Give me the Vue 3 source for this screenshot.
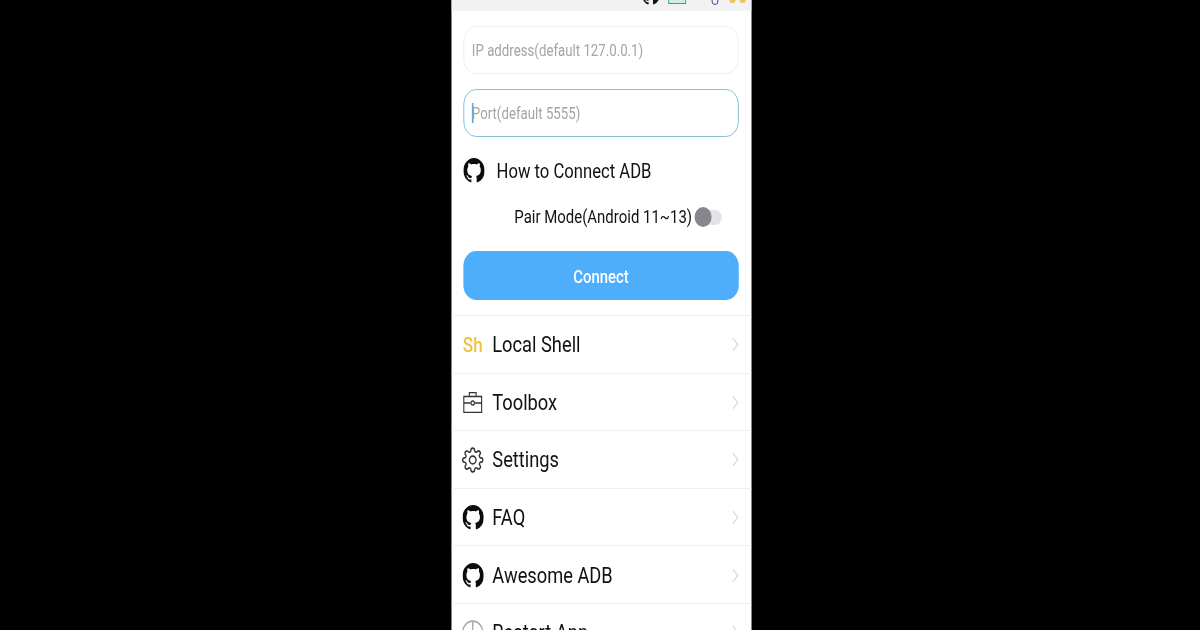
<script setup>
const github = 'M8 0C3.58 0 0 3.58 0 8c0 3.54 2.29 6.53 5.47 7.59.4.07.55-.17.55-.38 0-.19-.01-.82-.01-1.49-2.01.37-2.53-.49-2.69-.94-.09-.23-.48-.94-.82-1.13-.28-.15-.68-.52-.01-.53.63-.01 1.08.58 1.23.82.72 1.21 1.87.87 2.33.66.07-.52.28-.87.51-1.07-1.78-.2-3.64-.89-3.64-3.95 0-.87.31-1.59.82-2.15-.08-.2-.36-1.02.08-2.12 0 0 .67-.21 2.2.82.64-.18 1.32-.27 2-.27.68 0 1.36.09 2 .27 1.53-1.04 2.2-.82 2.2-.82.44 1.1.16 1.92.08 2.12.51.56.82 1.27.82 2.15 0 3.07-1.87 3.75-3.65 3.95.29.25.54.73.54 1.48 0 1.07-.01 1.93-.01 2.2 0 .21.15.46.55.38A8.013 8.013 0 0016 8c0-4.42-3.58-8-8-8z'

const rows = [
  { label: 'Local Shell', icon: 'sh' },
  { label: 'Toolbox', icon: 'toolbox' },
  { label: 'Settings', icon: 'gear' },
  { label: 'FAQ', icon: 'github' },
  { label: 'Awesome ADB', icon: 'github' },
  { label: 'Restart App', icon: 'restart' }
]
</script>

<template>
  <div class="page">
    <div class="phone">
      <div class="status">
        <svg class="st_git" viewBox="0 0 16 16"><path :d="github" /></svg>
        <span class="st_batt"></span>
        <span class="st_blue"></span>
        <span class="st_dots"><i></i><i></i></span>
      </div>

      <div class="form">
        <div class="field">IP address(default 127.0.0.1)</div>
        <div class="field focused"><span class="caret"></span>Port(default 5555)</div>

        <div class="howto">
          <svg class="git_icon" viewBox="0 0 16 16"><path :d="github" /></svg>
          <span class="howto_text">How to Connect ADB</span>
        </div>

        <div class="pair">
          <span>Pair Mode(Android 11~13)</span>
          <span class="switch"><span class="knob"></span></span>
        </div>

        <button class="connect">Connect</button>
      </div>

      <div class="list">
        <div v-for="row in rows" :key="row.label" class="row">
          <span class="row_icon">
            <span v-if="row.icon === 'sh'" class="sh">Sh</span>
            <svg v-else-if="row.icon === 'github'" class="git_icon" viewBox="0 0 16 16"><path :d="github" /></svg>
            <svg v-else-if="row.icon === 'toolbox'" class="line_icon toolbox" viewBox="1 2 22 21">
              <path d="M1.5 6.5h21v16h-21zM1.5 13h8M14.5 13h8M8 6.5V2.5h8v4" />
              <circle cx="12" cy="13" r="2" />
            </svg>
            <svg v-else-if="row.icon === 'gear'" class="line_icon" viewBox="0 0 24 24">
              <circle cx="12" cy="12" r="3.6" />
              <path d="M19.4 15a1.65 1.65 0 0 0 .33 1.82l.06.06a2 2 0 0 1 0 2.83 2 2 0 0 1-2.83 0l-.06-.06a1.65 1.65 0 0 0-1.82-.33 1.65 1.65 0 0 0-1 1.51V21a2 2 0 0 1-2 2 2 2 0 0 1-2-2v-.09A1.65 1.65 0 0 0 9 19.4a1.65 1.65 0 0 0-1.82.33l-.06.06a2 2 0 0 1-2.83 0 2 2 0 0 1 0-2.83l.06-.06a1.65 1.65 0 0 0 .33-1.82 1.65 1.65 0 0 0-1.51-1H3a2 2 0 0 1-2-2 2 2 0 0 1 2-2h.09A1.65 1.65 0 0 0 4.6 9a1.65 1.65 0 0 0-.33-1.82l-.06-.06a2 2 0 0 1 0-2.83 2 2 0 0 1 2.83 0l.06.06a1.65 1.65 0 0 0 1.82.33H9a1.65 1.65 0 0 0 1-1.51V3a2 2 0 0 1 2-2 2 2 0 0 1 2 2v.09a1.65 1.65 0 0 0 1 1.51 1.65 1.65 0 0 0 1.82-.33l.06-.06a2 2 0 0 1 2.83 0 2 2 0 0 1 0 2.83l-.06.06a1.65 1.65 0 0 0-.33 1.82V9a1.65 1.65 0 0 0 1.51 1H21a2 2 0 0 1 2 2 2 2 0 0 1-2 2h-.09a1.65 1.65 0 0 0-1.51 1z" />
            </svg>
            <svg v-else class="line_icon restart" viewBox="0 0 24 24">
              <circle cx="12" cy="12" r="11" />
              <path d="M12 1v11" />
            </svg>
          </span>
          <span class="row_label">{{ row.label }}</span>
          <svg class="chevron" viewBox="0 0 10 18" preserveAspectRatio="none"><path d="M1.5 1.5L8.5 9L1.5 16.5" /></svg>
        </div>
      </div>
    </div>
  </div>
</template>

<style>
html, body {
  margin: 0;
  background: #000;
}
</style>

<style scoped>
.page {
  display: flex;
  justify-content: center;
  width: 1200px;
  height: 630px;
  padding-left: 2px;
  box-sizing: border-box;
  background: #000;
  overflow: hidden;
}

/* the recording is squeezed sideways, so the screen is laid out wide and scaled */
.phone {
  flex: none;
  width: 353px;
  height: 630px;
  background: #fff;
  overflow: hidden;
  transform: scaleX(0.85);
  filter: blur(0.35px);
  font-family: Roboto, "Liberation Sans", sans-serif;
  color: #111;
}

.status {
  position: relative;
  height: 11px;
  background: #f2f2f2;
  overflow: hidden;
}

.st_git {
  position: absolute;
  left: 224px;
  top: -16px;
  width: 21px;
  height: 21px;
  fill: #111;
}

.st_batt {
  position: absolute;
  left: 255px;
  top: -8px;
  width: 19px;
  height: 10px;
  border: 1px solid #2fa58e;
  background: #cfeee6;
}

.st_blue {
  position: absolute;
  left: 306px;
  top: -3px;
  width: 6px;
  height: 6px;
  border: 1.5px solid #2b3a8c;
  border-radius: 50%;
}

.st_dots {
  position: absolute;
  left: 327px;
  top: -3px;
  display: flex;
  gap: 5px;
}

.st_dots i {
  width: 7px;
  height: 6px;
  border-radius: 50%;
  background: #f3c15a;
}

.form {
  display: flex;
  flex-direction: column;
  padding: 15px 15px 15px 14px;
}

.field {
  display: flex;
  align-items: center;
  box-sizing: border-box;
  height: 48px;
  padding: 1px 0 0 9px;
  border: 1.5px solid #eeeeee;
  border-radius: 15px;
  font-size: 15.6px;
  color: #a4a4a4;
}

.field + .field {
  margin-top: 15px;
}

.focused {
  position: relative;
  padding-top: 2px;
  border-color: #7dbcd8;
}

.caret {
  position: absolute;
  left: 9px;
  top: 13px;
  width: 1.5px;
  height: 20px;
  background: #6fa8c8;
}

.howto {
  display: flex;
  align-items: center;
  gap: 14px;
  height: 25px;
  margin-top: 21px;
  font-size: 19.6px;
}

.howto_text {
  padding-top: 2px;
}

.git_icon {
  flex: none;
  width: 25px;
  height: 25px;
  fill: #0c0c0c;
}

.pair {
  display: flex;
  align-items: center;
  gap: 3.5px;
  height: 24px;
  margin-top: 22px;
  padding-left: 60px;
  font-size: 17.6px;
}

.switch {
  position: relative;
  flex: none;
  width: 31px;
  height: 15px;
  border-radius: 8px;
  background: #e3e3e5;
}

.knob {
  position: absolute;
  left: -1px;
  top: -2.5px;
  width: 20px;
  height: 20px;
  border-radius: 50%;
  background: #85878c;
}

.connect {
  height: 49px;
  margin-top: 22px;
  padding-top: 4px;
  border: 0;
  border-radius: 15px;
  background: #4eaefc;
  color: #fff;
  font-family: inherit;
  font-size: 17.5px;
  font-weight: 500;
}

.list {
  display: flex;
  flex-direction: column;
}

.row {
  flex: none;
  display: flex;
  align-items: center;
  box-sizing: border-box;
  height: 57.6px;
  padding: 1px 15px 0 12px;
  border-top: 1px solid #efefef;
}

.row_icon {
  flex: none;
  display: flex;
  align-items: center;
  justify-content: center;
  width: 26px;
  margin-right: 10px;
}

.sh {
  font-size: 20px;
  font-weight: 500;
  color: #f0c243;
}

.line_icon {
  width: 26px;
  height: 26px;
  fill: none;
  stroke: #333;
  stroke-width: 1.5;
}

.toolbox {
  width: 24px;
  height: 21px;
  stroke-width: 1.3;
}

.restart {
  stroke: #a8a8a8;
}

.row_label {
  flex: 1;
  font-size: 21.5px;
  color: #111;
}

.chevron {
  flex: none;
  width: 8px;
  height: 15px;
  fill: none;
  stroke: #d4d4d4;
  stroke-width: 1.4;
}
</style>
